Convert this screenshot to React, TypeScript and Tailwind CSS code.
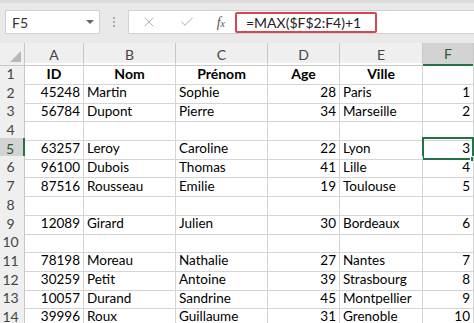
import { X, Check } from "lucide-react";

const rows: (string | number)[][] = [
  ["ID", "Nom", "Prénom", "Age", "Ville", ""],
  [45248, "Martin", "Sophie", 28, "Paris", 1],
  [56784, "Dupont", "Pierre", 34, "Marseille", 2],
  ["", "", "", "", "", ""],
  [63257, "Leroy", "Caroline", 22, "Lyon", 3],
  [96100, "Dubois", "Thomas", 41, "Lille", 4],
  [87516, "Rousseau", "Emilie", 19, "Toulouse", 5],
  ["", "", "", "", "", ""],
  [12089, "Girard", "Julien", 30, "Bordeaux", 6],
  ["", "", "", "", "", ""],
  [78198, "Moreau", "Nathalie", 27, "Nantes", 7],
  [30259, "Petit", "Antoine", 39, "Strasbourg", 8],
  [10057, "Durand", "Sandrine", 45, "Montpellier", 9],
  [39996, "Roux", "Guillaume", 31, "Grenoble", 10],
];

const cols = ["A", "B", "C", "D", "E", "F"];
const grid = "grid grid-cols-[25px_59px_92px_92px_72px_83px_51px]";

function Cell({ v, row, col }: { v: string | number; row: number; col: number }) {
  const selected = row === 5 && col === 5;
  if (row === 1) {
    return (
      <div className="h-full border-r border-b border-[#d4d4d4] flex items-center justify-center font-bold text-[14px] text-black">
        {v}
      </div>
    );
  }
  const isNum = typeof v === "number";
  return (
    <div
      className={`relative h-full border-r border-b border-[#d4d4d4] flex items-center px-[3px] text-[13.5px] text-black whitespace-nowrap ${
        isNum ? "justify-end" : "justify-start"
      }`}
    >
      {selected && (
        <div className="absolute -left-px -top-px right-[-1px] bottom-[-1px] border-2 border-[#217346]">
          <div className="absolute -right-[4px] -bottom-[4px] w-[6px] h-[6px] bg-[#217346] border border-white" />
        </div>
      )}
      <span className="relative">{v}</span>
    </div>
  );
}

export default function App() {
  return (
    <div
      className="w-[474px] h-[323px] overflow-hidden bg-white"
      style={{ fontFamily: "Lato, 'Open Sans', sans-serif" }}
    >
      {/* formula bar */}
      <div className="h-[43px] bg-[#e9e9e9] border-t-[3px] border-[#dcdcdc] flex items-start pt-[7px]">
        <div className="ml-[5px] w-[95px] h-[24px] bg-white border border-[#d0d0d0] flex items-center justify-between pl-[6px] pr-[5px]">
          <span className="text-[14px] text-[#333]">F5</span>
          <span className="w-0 h-0 border-l-[4px] border-r-[4px] border-t-[4px] border-l-transparent border-r-transparent border-t-[#666]" />
        </div>
        <div className="w-[28px] h-[24px] flex flex-col items-center justify-center gap-[2px]">
          <span className="w-[2px] h-[2px] bg-[#aaa]" />
          <span className="w-[2px] h-[2px] bg-[#aaa]" />
          <span className="w-[2px] h-[2px] bg-[#aaa]" />
        </div>
        <div className="flex-1 h-[24px] bg-white border border-[#d0d0d0] border-r-0 flex items-center">
          <div className="w-[104px] flex items-center justify-between pl-[12px] pr-[8px]">
            <X size={16} strokeWidth={1.5} className="text-[#b0b0b0]" />
            <Check size={16} strokeWidth={1.5} className="text-[#b0b0b0]" />
            <span className="italic text-[14px] text-[#555]" style={{ fontFamily: "'Liberation Serif', serif" }}>
              f<span className="text-[10px]">x</span>
            </span>
          </div>
          <div className="ml-[2px] w-[142px] h-[21px] border-2 border-[#d9464b] rounded-[2px] flex items-center pl-[9px] text-[14px] text-[#222]">
            =MAX($F$2:F4)+1
          </div>
        </div>
      </div>
      {/* header row */}
      <div className={`${grid} h-[20px] bg-[#efefef]`}>
        <div className="relative border-r border-b border-[#c8c8c8]">
          <svg className="absolute right-[3px] bottom-[3px]" width="11" height="11">
            <polygon points="11,0 11,11 0,11" fill="#b8b8b8" />
          </svg>
        </div>
        {cols.map((c) => (
          <div
            key={c}
            className={`flex items-center justify-center text-[14px] border-r border-[#c8c8c8] ${
              c === "F"
                ? "bg-[#d3d3d3] text-[#2a5a3a] border-b-2 border-b-[#217346]"
                : "text-[#444] border-b border-b-[#c8c8c8]"
            }`}
          >
            {c}
          </div>
        ))}
      </div>
      {/* rows */}
      {rows.map((r, i) => {
        const n = i + 1;
        return (
          <div key={n} className={`${grid} h-[18.7px]`}>
            <div
              className={`flex items-center justify-center pr-[3px] text-[14px] border-b border-[#d4d4d4] ${
                n === 5
                  ? "bg-[#d3d3d3] text-[#2a5a3a] border-r-2 border-r-[#217346]"
                  : "bg-[#efefef] text-[#444] border-r border-r-[#c8c8c8]"
              }`}
            >
              {n}
            </div>
            {r.map((v, j) => (
              <Cell key={j} v={v} row={n} col={j} />
            ))}
          </div>
        );
      })}
    </div>
  );
}
